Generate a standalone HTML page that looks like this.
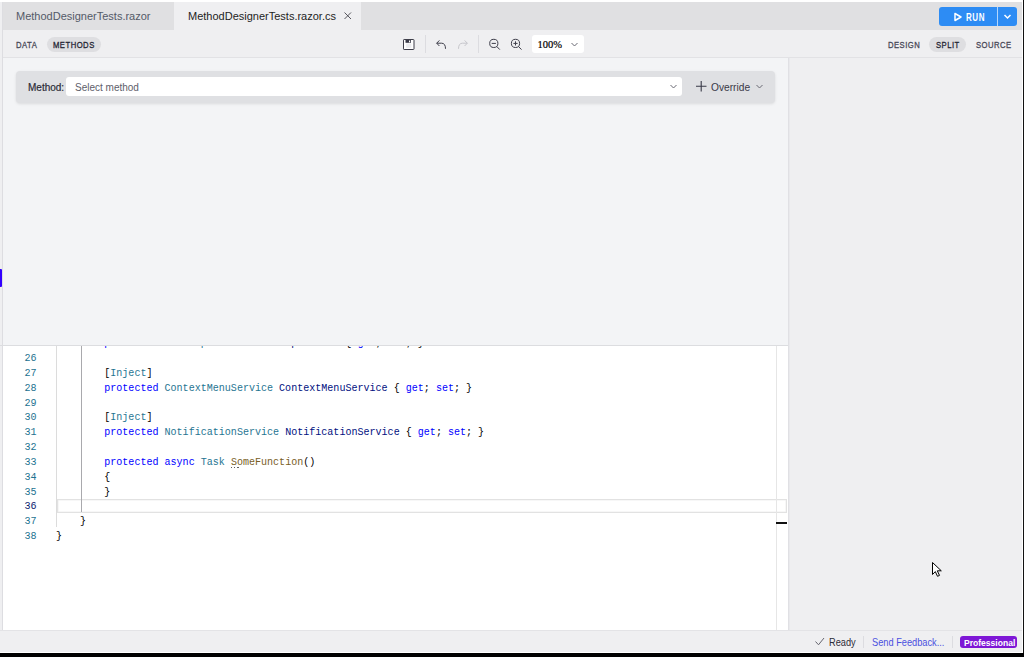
<!DOCTYPE html>
<html><head><meta charset="utf-8">
<style>
*{box-sizing:border-box;margin:0;padding:0}
html,body{width:1024px;height:657px;overflow:hidden;background:#fff}
body{position:relative;font-family:"Liberation Sans",sans-serif}
.a{position:absolute}
svg{position:absolute;overflow:visible}
#frame{left:0;top:2px;width:1022px;height:650px;background:#efeff1}
#blackR{left:1023px;top:0;width:1px;height:657px;background:#111}
#blackB{left:0;top:653px;width:1024px;height:4px;background:#000}
#tabbar{left:2px;top:2px;width:1020px;height:28px;background:#e0e0e2}
.tab{top:0;height:28px;font-size:11px;line-height:28px;white-space:nowrap}
#tab1{left:0;width:172px;color:#545a68;padding-left:14px}
#tab2{left:172px;width:187px;background:#efeff1;color:#1e1e24;padding-left:14px}
#toolbar{left:2px;top:30px;width:1020px;height:28px;background:#efeff1;border-bottom:1px solid #e2e2e5}
.tb{font-size:9.6px;font-weight:normal;-webkit-text-stroke:0.3px #474756;color:#474756;top:39px;line-height:12px;white-space:nowrap;letter-spacing:0.6px;transform:scaleX(0.8);transform-origin:0 0}
.pill{background:#dedee1;border-radius:8px}
#design{left:2px;top:58px;width:786px;height:288px;background:#f3f4f6;border-left:1px solid #d8d8dc;border-bottom:1px solid #dcdde0}
#split{left:788px;top:58px;width:2px;height:573px;background:#e9e9ec;border-left:1px solid #e0e0e4}
#right{left:790px;top:58px;width:232px;height:573px;background:#efeff1}
#code{left:2px;top:346px;width:786px;height:284px;background:#fff;border-left:1px solid #d8d8dc;overflow:hidden}
#status{left:0;top:630px;width:1022px;height:22px;background:#efeff1;border-top:1px solid #e3e3e6}
/* run */
#run{left:939px;top:7px;width:78px;height:19px;background:#2d8cf4;border-radius:3px}
#runtxt{left:965.5px;top:9px;font-size:10px;font-weight:bold;color:#fff;line-height:17px;letter-spacing:0.7px;transform:scaleX(0.8);transform-origin:0 0}
#rundiv{left:997px;top:7px;width:1px;height:19px;background:#b5d6fc}
/* method bar */
#mbar{left:15.5px;top:71px;width:759.5px;height:32px;background:#dfe0e3;border-radius:4px;box-shadow:0 1px 3px rgba(0,0,0,0.10)}
#mlabel{left:28px;top:81px;font-size:10px;color:#2c2c38;line-height:14px;-webkit-text-stroke:0.2px #2c2c38}
#minput{left:66px;top:77px;width:616px;height:19px;background:#fff;border-radius:3px}
#mph{left:75px;top:81px;font-size:10px;color:#5e5e6a;line-height:14px}
#override{left:711px;top:81px;font-size:10.2px;color:#3a3a48;line-height:14px}
/* code */
.ln{position:absolute;left:0;width:33.5px;text-align:right;font-family:"Liberation Mono",monospace;font-size:10.05px;color:#1d7290;white-space:pre;line-height:15px}
.ln.cur{color:#0b216f}
.cl{position:absolute;left:53px;font-family:"Liberation Mono",monospace;font-size:10.05px;color:#000;white-space:pre;line-height:15px}
.k{color:#0000ff}.t{color:#1f7592}.f{color:#795e26}.p{color:#001080}
/* status */
.st{font-size:10.5px;line-height:14px;top:635px;white-space:nowrap;transform:scaleX(0.88);transform-origin:0 0}
#badge{left:960px;top:636px;width:57px;height:12px;background:#7e17d6;border-radius:3px}
</style></head><body>
<div id="frame" class="a"></div>
<div id="tabbar" class="a">
  <div id="tab1" class="a tab">MethodDesignerTests.razor</div>
  <div id="tab2" class="a tab">MethodDesignerTests.razor.cs</div>
</div>
<svg style="left:0;top:0" width="1" height="1"><path d="M344.5,12.5 L351,19 M351,12.5 L344.5,19" stroke="#44444c" stroke-width="0.9" fill="none"/></svg>
<div id="run" class="a"></div>
<div id="rundiv" class="a"></div>
<svg style="left:0;top:0" width="1" height="1">
  <path d="M955,13.5 L955,20.5 L961,17 Z" stroke="#fff" stroke-width="1.5" fill="none" stroke-linejoin="round"/>
  <path d="M1004.5,15 L1007.5,18 L1010.5,15" stroke="#fff" stroke-width="1.5" fill="none"/>
</svg>
<div id="runtxt" class="a">RUN</div>

<div id="toolbar" class="a"></div>
<div class="a tb" style="left:16px">DATA</div>
<div class="a pill" style="left:47px;top:37px;width:54px;height:15px"></div>
<div class="a tb" style="left:53px;color:#1f2433;-webkit-text-stroke-color:#1f2433">METHODS</div>
<!-- center icons -->
<svg style="left:0;top:0" width="1" height="1">
  <rect x="403.5" y="39.5" width="10.5" height="10" rx="0.6" fill="#fff" stroke="#3e3e4a" stroke-width="1"/>
  <rect x="405.5" y="40" width="5.5" height="2.8" fill="#3a3a48"/>
  <rect x="409" y="40.5" width="1.2" height="1.8" fill="#fff"/>
  <rect x="406.2" y="43.5" width="5.2" height="4.3" fill="#ececef"/>
  <line x1="425.5" y1="35" x2="425.5" y2="53" stroke="#dcdce0" stroke-width="1"/>
  <path d="M439.4,40.4 L436.7,43.2 L439.4,46 M436.7,43.2 H441.5 Q445.5,43.2 445.5,48.8" stroke="#3e3e4a" stroke-width="1" fill="none"/>
  <path d="M464.6,40.4 L467.3,43.2 L464.6,46 M467.3,43.2 H462.5 Q458.5,43.2 458.5,48.8" stroke="#c6c6cb" stroke-width="1" fill="none"/>
  <line x1="478.5" y1="35" x2="478.5" y2="53" stroke="#dcdce0" stroke-width="1"/>
  <circle cx="493.8" cy="43.4" r="4.1" stroke="#3e3e4a" stroke-width="1" fill="none"/>
  <path d="M491.7,43.4 H495.9 M496.8,46.5 L499.8,49.6" stroke="#3e3e4a" stroke-width="1" fill="none"/>
  <circle cx="515.5" cy="43.4" r="4.1" stroke="#3e3e4a" stroke-width="1" fill="none"/>
  <path d="M513.4,43.4 H517.6 M515.5,41.3 V45.5 M518.5,46.5 L521.5,49.6" stroke="#3e3e4a" stroke-width="1" fill="none"/>
</svg>
<div class="a" style="left:532px;top:35px;width:52px;height:18px;background:#fff;border-radius:3px"></div>
<div class="a" style="left:537.5px;top:38px;font-family:'Liberation Serif',serif;font-size:10.5px;line-height:14px;color:#000;-webkit-text-stroke:0.2px #000">100%</div>
<svg style="left:0;top:0" width="1" height="1"><path d="M571.5,43 L574.5,46 L577.5,43" stroke="#6a6a74" stroke-width="1" fill="none"/></svg>
<div class="a tb" style="left:888px">DESIGN</div>
<div class="a pill" style="left:929px;top:37px;width:37px;height:15px"></div>
<div class="a tb" style="left:936px;color:#1f2433;-webkit-text-stroke-color:#1f2433">SPLIT</div>
<div class="a tb" style="left:976px">SOURCE</div>

<div id="design" class="a"></div>
<div class="a" style="left:0;top:269px;width:2px;height:18px;background:#3200ff;border-radius:0 1px 1px 0"></div>
<div id="mbar" class="a"></div>
<div id="mlabel" class="a">Method:</div>
<div id="minput" class="a"></div>
<div id="mph" class="a">Select method</div>
<svg style="left:0;top:0" width="1" height="1">
  <path d="M670.5,85 L673.5,88 L676.5,85" stroke="#6a6a74" stroke-width="1" fill="none"/>
  <path d="M696,86.3 H706.5 M701.2,81 V91.5" stroke="#3a3a48" stroke-width="1.1" fill="none"/>
  <path d="M756.5,85 L759.5,88 L762.5,85" stroke="#6a6a74" stroke-width="1" fill="none"/>
</svg>
<div id="override" class="a">Override</div>

<div id="split" class="a"></div>
<div id="right" class="a"></div>
<div id="code" class="a">
  <div class="a" style="left:53px;top:-1px;width:1px;height:182px;background:#dcdcdc"></div>
  <div class="a" style="left:54px;top:153px;width:730px;height:14px;border:1px solid #e2e2e2;box-shadow:inset 0 0 0 0.5px #f0f0f0"></div>
  <div class="a" style="left:77.5px;top:-1px;width:1.3px;height:167px;background:#a9a9ad"></div>
  <div class="a" style="left:773px;top:0;width:1px;height:284px;background:#e6e6e6"></div>
  <div class="a" style="left:773px;top:175.5px;width:11px;height:2px;background:#111"></div>
<div class="a" style="left:228px;top:120.5px;width:1.3px;height:1.3px;background:#606060"></div>
  <div class="a" style="left:231.2px;top:120.5px;width:1.3px;height:1.3px;background:#606060"></div>
  <div class="a" style="left:234.4px;top:120.5px;width:1.3px;height:1.3px;background:#606060"></div>
<div class="cl" style="top:-9.83px">        <span class="k">protected</span> <span class="t">TooltipService</span> <span class="p">TooltipService</span> { <span class="k">get</span>; <span class="k">set</span>; }</div>
<div class="ln" style="top:5.00px">26</div>
<div class="cl" style="top:5.00px"></div>
<div class="ln" style="top:19.83px">27</div>
<div class="cl" style="top:19.83px">        [<span class="t">Inject</span>]</div>
<div class="ln" style="top:34.67px">28</div>
<div class="cl" style="top:34.67px">        <span class="k">protected</span> <span class="t">ContextMenuService</span> <span class="p">ContextMenuService</span> { <span class="k">get</span>; <span class="k">set</span>; }</div>
<div class="ln" style="top:49.50px">29</div>
<div class="cl" style="top:49.50px"></div>
<div class="ln" style="top:64.33px">30</div>
<div class="cl" style="top:64.33px">        [<span class="t">Inject</span>]</div>
<div class="ln" style="top:79.17px">31</div>
<div class="cl" style="top:79.17px">        <span class="k">protected</span> <span class="t">NotificationService</span> <span class="p">NotificationService</span> { <span class="k">get</span>; <span class="k">set</span>; }</div>
<div class="ln" style="top:94.00px">32</div>
<div class="cl" style="top:94.00px"></div>
<div class="ln" style="top:108.83px">33</div>
<div class="cl" style="top:108.83px">        <span class="k">protected</span> <span class="k">async</span> <span class="t">Task</span> <span class="f">SomeFunction</span>()</div>
<div class="ln" style="top:123.66px">34</div>
<div class="cl" style="top:123.66px">        {</div>
<div class="ln" style="top:138.50px">35</div>
<div class="cl" style="top:138.50px">        }</div>
<div class="ln cur" style="top:153.33px">36</div>
<div class="cl" style="top:153.33px"></div>
<div class="ln" style="top:168.16px">37</div>
<div class="cl" style="top:168.16px">    }</div>
<div class="ln" style="top:183.00px">38</div>
<div class="cl" style="top:183.00px">}</div>
</div>
<div class="a" style="left:0;top:345px;width:788px;height:1px;background:#dcdde0"></div>
<div id="status" class="a"></div>
<svg style="left:0;top:0" width="1" height="1"><path d="M815.5,641.5 L818.5,644.8 L824,638" stroke="#666670" stroke-width="1" fill="none"/></svg>
<div class="a st" style="left:829px;color:#2c2c38">Ready</div>
<div class="a" style="left:863px;top:636px;width:1px;height:12px;background:#dcdce0"></div>
<div class="a st" style="left:872px;color:#4a4fe0">Send Feedback...</div>
<div class="a" style="left:952px;top:636px;width:1px;height:12px;background:#dcdce0"></div>
<div id="badge" class="a"></div>
<div class="a st" style="left:963.5px;top:637px;line-height:12px;color:#fff;font-weight:bold;font-size:9.2px;transform:scaleX(0.93)">Professional</div>
<svg style="left:0;top:0" width="1" height="1"><path d="M932.5,562.5 V574.5 L935.3,571.6 L937.5,576.3 L939.5,575.4 L937.3,570.8 H941.3 Z" fill="#fff" stroke="#000" stroke-width="1" stroke-linejoin="round"/></svg>
<div class="a" style="left:2px;top:2px;width:1px;height:628px;background:#dddde1"></div>
<div id="blackR" class="a"></div>
<div id="blackB" class="a"></div>
</body></html>
